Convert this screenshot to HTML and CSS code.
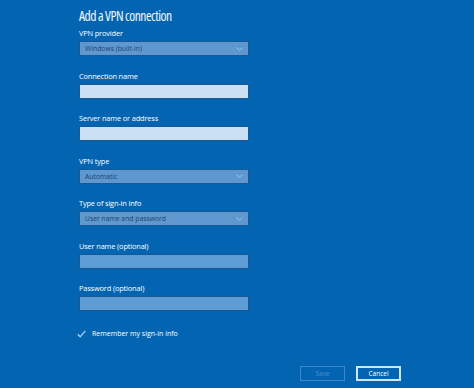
FILE: index.html
```html
<!DOCTYPE html>
<html>
<head>
<meta charset="utf-8">
<link rel="stylesheet" href="styles.css">
</head>
<body>
<div class="page">
  <h1 class="title">Add a VPN connection</h1>
  <div class="field">
    <div class="label">VPN provider</div>
    <div class="select"><span>Windows (built-in)</span><svg class="chev" width="7" height="4" viewBox="0 0 7 4"><polyline points="0.5,0.5 3.5,3.2 6.5,0.5" fill="none" stroke="#a9c4de" stroke-width="1"/></svg></div>
  </div>
  <div class="field">
    <div class="label">Connection name</div>
    <div class="input light"></div>
  </div>
  <div class="field">
    <div class="label">Server name or address</div>
    <div class="input light"></div>
  </div>
  <div class="field">
    <div class="label">VPN type</div>
    <div class="select"><span>Automatic</span><svg class="chev" width="7" height="4" viewBox="0 0 7 4"><polyline points="0.5,0.5 3.5,3.2 6.5,0.5" fill="none" stroke="#a9c4de" stroke-width="1"/></svg></div>
  </div>
  <div class="field">
    <div class="label">Type of sign-in info</div>
    <div class="select"><span>User name and password</span><svg class="chev" width="7" height="4" viewBox="0 0 7 4"><polyline points="0.5,0.5 3.5,3.2 6.5,0.5" fill="none" stroke="#a9c4de" stroke-width="1"/></svg></div>
  </div>
  <div class="field">
    <div class="label">User name (optional)</div>
    <div class="input mid"></div>
  </div>
  <div class="field">
    <div class="label">Password (optional)</div>
    <div class="input mid"></div>
  </div>
  <div class="check">
    <svg width="9" height="8" viewBox="0 0 9 8"><polyline points="0.8,4.2 3.2,6.8 8.3,0.8" fill="none" stroke="#a8d4ff" stroke-width="1.3"/></svg>
    <span>Remember my sign-in info</span>
  </div>
  <div class="buttons">
    <div class="btn save">Save</div>
    <div class="btn cancel">Cancel</div>
  </div>
</div>
</body>
</html>
```
FILE: styles.css
```css
html, body {
  margin: 0;
  padding: 0;
  background: #0365b2;
}
body {
  width: 474px;
  height: 388px;
  overflow: hidden;
  font-family: "Open Sans", "Noto Sans", sans-serif;
  color: #ffffff;
}
.page {
  padding: 5px 0 0 79px;
}
.title {
  margin: 0;
  font-size: 13.6px;
  font-weight: 400;
  font-stretch: 75%;
  letter-spacing: -0.5px;
  line-height: 21px;
  color: #f2f7fc;
}
.field {
  width: 170px;
  margin-top: 1px;
  margin-bottom: 13.5px;
}
.field + .field {
  margin-top: 0;
}
.label {
  font-size: 7.4px;
  letter-spacing: -0.15px;
  line-height: 12px;
  height: 12px;
  color: #ffffff;
  margin-bottom: 2px;
}
.select, .input {
  box-sizing: border-box;
  height: 15px;
  border: 1px solid #1b5892;
}
.select {
  display: flex;
  align-items: center;
  justify-content: space-between;
  padding: 0 5px 0 5px;
  background: #5f98cf;
  font-size: 6.8px;
  color: #1f436b;
}
.chev {
  display: block;
}
.input.light {
  background: #cbe0f3;
}
.input.mid {
  background: #5e9cd6;
}
.check {
  display: flex;
  align-items: center;
  gap: 6px;
  margin-top: 18px;
  margin-left: -2px;
  font-size: 7px;
  line-height: 10px;
  color: #ffffff;
}
.check svg {
  display: block;
}
.buttons {
  display: flex;
  gap: 11px;
  margin-top: 27px;
  margin-left: 221px;
}
.btn {
  box-sizing: border-box;
  width: 45px;
  height: 15px;
  font-size: 6.5px;
  display: flex;
  align-items: center;
  justify-content: center;
}
.save {
  border: 1px solid #3f87c8;
  color: #4f8fcb;
}
.cancel {
  border: 2px solid #cde6f8;
  color: #ffffff;
}
```
